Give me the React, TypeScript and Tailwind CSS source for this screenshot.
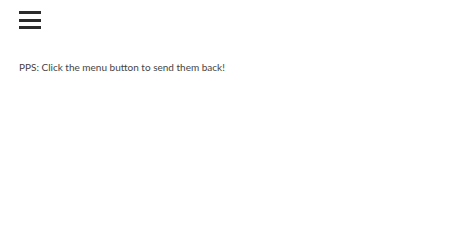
export default function App() {
  return (
    <div className="min-h-[207px] bg-white px-[19px] pt-[11px] font-['Lato',sans-serif]">
      <button className="flex w-[22px] flex-col gap-[4.5px] p-0" aria-label="menu">
        <span className="block h-[3px] w-[22px] bg-[#2b2b2b]" />
        <span className="block h-[3px] w-[22px] bg-[#2b2b2b]" />
        <span className="block h-[3px] w-[22px] bg-[#2b2b2b]" />
      </button>
      <p className="mt-[31px] text-[10px] leading-[14px] text-[#444]">
        PPS: Click the menu button to send them back!
      </p>
    </div>
  );
}
